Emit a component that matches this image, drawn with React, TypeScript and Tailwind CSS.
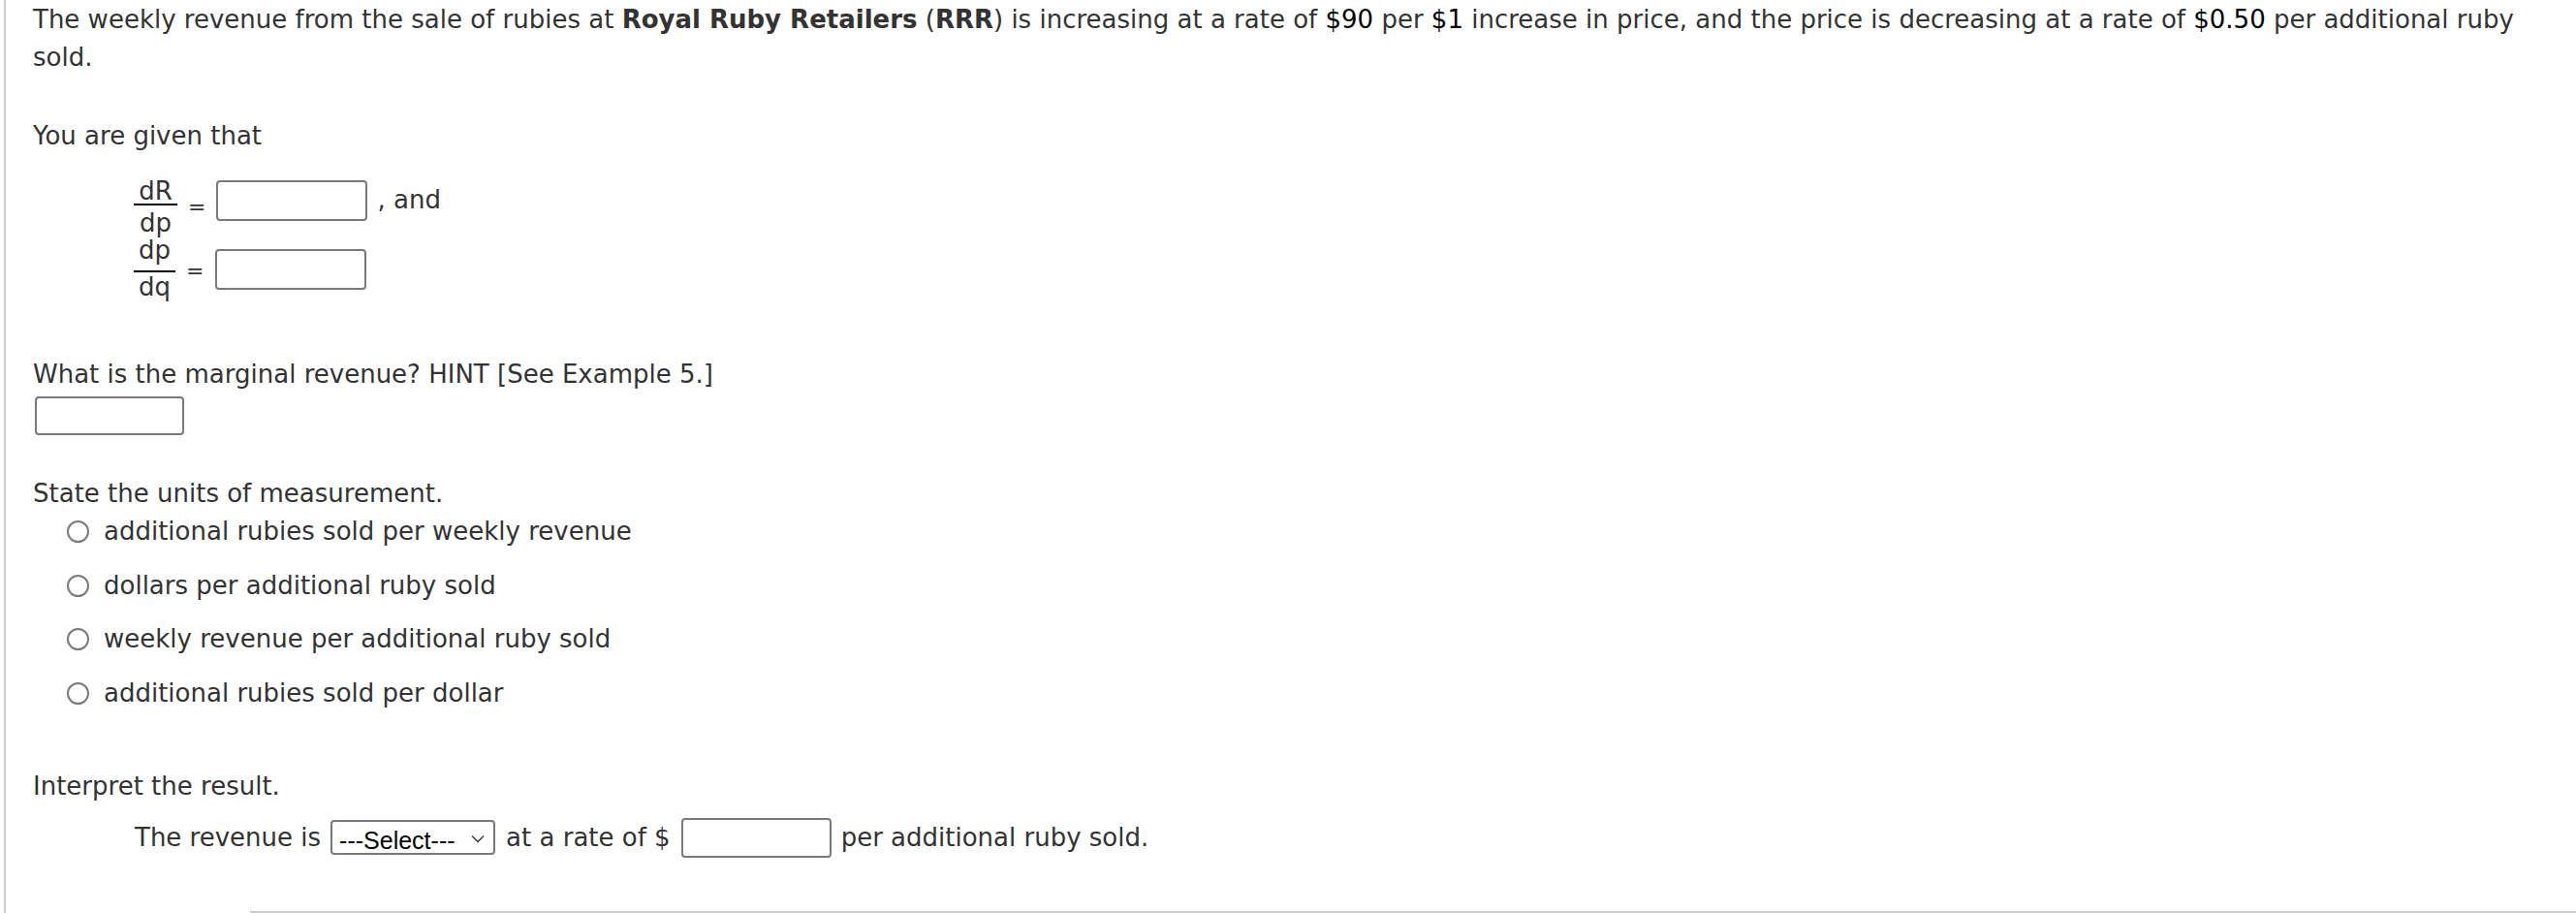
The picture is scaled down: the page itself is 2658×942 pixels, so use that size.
import React from 'react';

const units = [
  'additional rubies sold per weekly revenue',
  'dollars per additional ruby sold',
  'weekly revenue per additional ruby sold',
  'additional rubies sold per dollar',
];

function Blank({ className = '' }: { className?: string }) {
  return (
    <input
      type="text"
      className={`border-2 border-[#7a7a7a] rounded-[4px] bg-white outline-none ${className}`}
    />
  );
}

export default function App() {
  return (
    <div className="w-[2658px] h-[942px] overflow-hidden bg-white text-[#333] font-['DejaVu_Sans',Verdana,sans-serif] text-[26px] leading-[39px]">
      <div className="ml-[4px] h-full border-l-2 border-[#cccccc] pl-[28px] pt-[1px] flex flex-col">
        {/* question text */}
        <p className="w-[2610px]">
          The weekly revenue from the sale of rubies at <b>Royal Ruby Retailers</b> (<b>RRR</b>) is
          increasing at a rate of <span className="text-black">$90</span> per{' '}
          <span className="text-black">$1</span> increase in price, and the price is decreasing at a
          rate of <span className="text-black">$0.50</span> per additional ruby sold.
        </p>

        <p className="mt-[42px]">You are given that</p>

        {/* derivatives */}
        <div className="mt-[24px] ml-[104px] flex flex-col">
          <div className="flex items-start">
            <div className="flex flex-col items-center w-[45px]">
              <span className="leading-[26px]">dR</span>
              <span className="h-[2px] w-full bg-black" />
              <span className="pt-[5px] leading-[26px]">dp</span>
            </div>
            <span className="ml-[11px] mt-[19px] text-[22px] leading-[22px]">=</span>
            <Blank className="ml-[11px] mt-[2px] w-[156px] h-[42px]" />
            <span className="ml-[10px] mt-[8px] leading-[28px]">, and</span>
          </div>
          <div className="flex items-start">
            <div className="flex flex-col items-center w-[43px]">
              <span className="pt-[2px] pb-[8px] leading-[26px]">dp</span>
              <span className="h-[2px] w-full bg-black" />
              <span className="pt-[2px] leading-[26px]">dq</span>
            </div>
            <span className="ml-[11px] mt-[26px] text-[22px] leading-[22px]">=</span>
            <Blank className="ml-[12px] mt-[14px] w-[156px] h-[42px]" />
          </div>
        </div>

        <p className="mt-[58px]">What is the marginal revenue? HINT [See Example 5.]</p>
        <Blank className="ml-[2px] mt-[3px] w-[154px] h-[40px]" />

        <p className="mt-[41px]">State the units of measurement.</p>
        <div className="flex flex-col gap-[16.5px]">
          {units.map((u) => (
            <label key={u} className="flex items-center h-[39px] ml-[35px]">
              <input
                type="radio"
                name="units"
                className="appearance-none w-[23px] h-[23px] rounded-full border-2 border-[#7a7a7a] bg-white"
              />
              <span className="ml-[15px]">{u}</span>
            </label>
          ))}
        </div>

        <p className="mt-[57px]">Interpret the result.</p>
        <div className="mt-[13px] ml-[105px] flex items-center h-[41px]">
          <span>The revenue is</span>
          <div className="relative ml-[10px] w-[170px] h-[36px] border-2 border-[#7a7a7a] rounded-[4px] bg-white">
            <select className="appearance-none w-full h-full bg-transparent pl-[7px] font-['Liberation_Sans',Arial,sans-serif] text-[25px] text-black outline-none">
              <option>---Select---</option>
              <option>increasing</option>
              <option>decreasing</option>
            </select>
            <svg
              className="absolute right-[9px] top-[13px] pointer-events-none"
              width="14"
              height="9"
              viewBox="0 0 14 9"
              fill="none"
              stroke="#333"
              strokeWidth="1.4"
            >
              <path d="M1 1.5l6 6 6-6" />
            </svg>
          </div>
          <span className="ml-[11px]">at a rate of $</span>
          <Blank className="ml-[11px] w-[155px] h-[41px]" />
          <span className="ml-[10px]">per additional ruby sold.</span>
        </div>

        <div className="mt-auto ml-[224px] border-t-2 border-[#cccccc]" />
      </div>
    </div>
  );
}
